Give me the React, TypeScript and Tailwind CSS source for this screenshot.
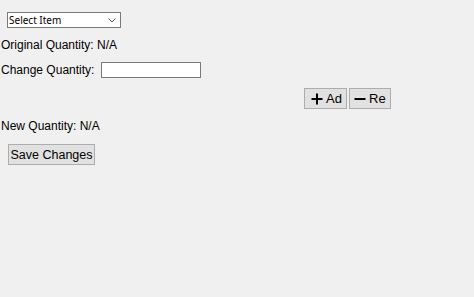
import React from 'react';

const PlusIcon = () => (
  <svg width="12" height="12" viewBox="0 0 12 12" className="shrink-0">
    <path d="M6 0.5V11.5M0.5 6H11.5" stroke="#000" strokeWidth="2" />
  </svg>
);

const MinusIcon = () => (
  <svg width="12" height="12" viewBox="0 0 12 12" className="shrink-0">
    <path d="M0.5 6H11.5" stroke="#000" strokeWidth="2" />
  </svg>
);

const App: React.FC = () => {
  return (
    <div className="w-[474px] h-[297px] bg-[#f0f0f0] text-black text-[12px] leading-[16px] font-['Liberation_Sans',Arial,sans-serif] overflow-hidden">
      <div className="flex flex-col">
        <div className="ml-[7px] mt-[12px] w-[114px] h-[16px] bg-white border border-[#7a7a7a] flex items-center justify-between pl-[1px] pr-[4px]">
          <span className="text-[10px] font-['Noto_Sans',sans-serif] leading-none">Select Item</span>
          <svg width="8" height="5" viewBox="0 0 8 5">
            <path d="M0.5 0.5L4 4L7.5 0.5" fill="none" stroke="#555" strokeWidth="1" />
          </svg>
        </div>

        <div className="mt-[9px] ml-[1px]">Original Quantity: N/A</div>

        <div className="mt-[9px] flex items-center h-[16px]">
          <span className="ml-[1px]">Change Quantity:</span>
          <input
            type="text"
            className="ml-[7px] w-[100px] h-[16px] bg-white border border-[#7a7a7a] outline-none"
          />
        </div>

        <div className="mt-[10px] ml-[304px] flex gap-[2px]">
          <button className="h-[21px] w-[43px] flex items-center gap-[3px] pl-[6px] text-[13px] bg-[#e1e1e1] border border-[#adadad]">
            <PlusIcon />
            <span>Ad</span>
          </button>
          <button className="h-[21px] w-[42px] flex items-center gap-[3px] pl-[4px] text-[13px] bg-[#e1e1e1] border border-[#adadad]">
            <MinusIcon />
            <span>Re</span>
          </button>
        </div>

        <div className="mt-[9px] ml-[1px]">New Quantity: N/A</div>

        <div className="mt-[10px] ml-[8px]">
          <button className="h-[21px] w-[87px] text-[12.5px] bg-[#e1e1e1] border border-[#adadad] flex items-center justify-center">
            Save Changes
          </button>
        </div>
      </div>
    </div>
  );
};

export default App;
